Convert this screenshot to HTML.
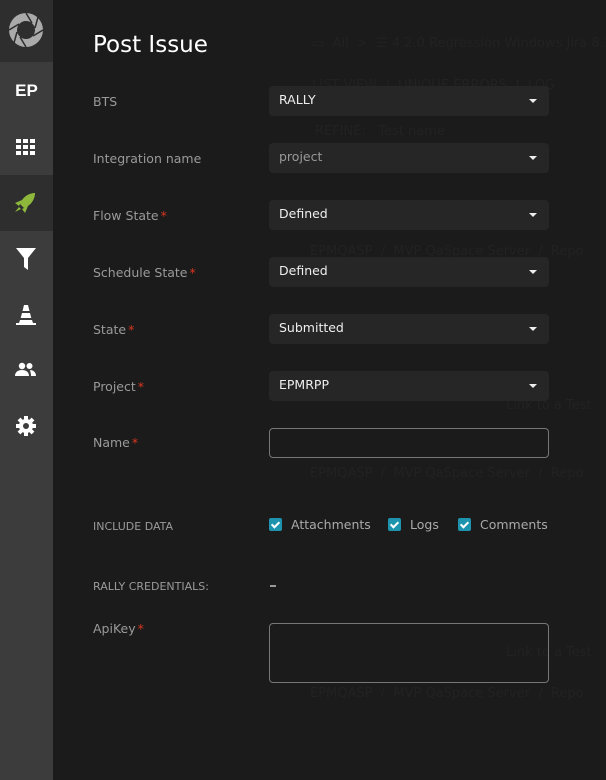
<!DOCTYPE html>
<html><head><meta charset="utf-8"><style>
*{box-sizing:border-box;margin:0;padding:0}
body{width:606px;height:780px;background:#1b1b1b;font-family:"DejaVu Sans","Liberation Sans",sans-serif;overflow:hidden;position:relative}
.sb{position:absolute;left:0;top:0;width:53px;height:780px;background:#3c3c3d}
.sb .top{position:absolute;left:0;top:0;width:53px;height:62px;background:#2e2e2e}
.sb .act{position:absolute;left:0;top:175px;width:53px;height:56px;background:#2e2e2e}
.ic{position:absolute;left:0;width:53px;text-align:center;color:#fff}
.bg{position:absolute;color:#222;font-size:13px;white-space:nowrap}
.lbl{position:absolute;left:93px;color:#9a9a9a;font-size:12.5px}
.lbl b{color:#d8371f;font-weight:normal;margin-left:2px}
.cap{position:absolute;left:93px;color:#9a9a9a;font-size:11px}
.sel{position:absolute;left:269px;width:280px;height:30px;background:#262626;border-radius:4px;color:#eee;font-size:12.5px;padding:6px 10px}
.sel:after{content:"";position:absolute;right:12px;top:13px;border-left:4px solid transparent;border-right:4px solid transparent;border-top:4px solid #eee}
.inp{position:absolute;left:269px;width:280px;border:1px solid #777;border-radius:4px}
.cb{position:absolute;top:518px;width:13px;height:13px;background:#1d93ad;border-radius:2px}
.cb:after{content:"";position:absolute;left:4px;top:2px;width:3px;height:6px;border:solid #fff;border-width:0 2px 2px 0;transform:rotate(45deg)}
.cbl{position:absolute;top:517px;color:#aaa;font-size:12.5px}
</style></head><body>
<div class="bg" style="left:312px;top:36px">▭ &nbsp;All &nbsp;&gt; &nbsp;☰ 4.2.0 Regression Windows Jira 8.19.1</div>
<div class="bg" style="left:312px;top:78px">LIST VIEW &nbsp;| &nbsp;UNIQUE ERRORS &nbsp;| &nbsp;LOG</div>
<div class="bg" style="left:315px;top:124px">REFINE: &nbsp;&nbsp;Test name</div>
<div class="bg" style="left:310px;top:244px">EPMQASP &nbsp;/ &nbsp;MVP QaSpace Server &nbsp;/ &nbsp;Repo</div>
<div class="bg" style="left:310px;top:466px">EPMQASP &nbsp;/ &nbsp;MVP QaSpace Server &nbsp;/ &nbsp;Repo</div>
<div class="bg" style="left:310px;top:686px">EPMQASP &nbsp;/ &nbsp;MVP QaSpace Server &nbsp;/ &nbsp;Repo</div>
<div class="bg" style="left:506px;top:398px">Link to a Test</div>
<div class="bg" style="left:506px;top:645px">Link to a Test</div>

<div class="sb"><div class="top"></div><div class="act"></div>
<svg class="ic" style="top:12px;left:8px;width:36px;height:36px" viewBox="0 0 36 36"><circle cx="18" cy="18" r="17" fill="#aaa"/><circle cx="18" cy="18" r="9" fill="#2e2e2e"/><g stroke="#2e2e2e" stroke-width="1.5"><line x1="18" y1="1" x2="24" y2="11"/><line x1="35" y1="18" x2="25" y2="24"/><line x1="18" y1="35" x2="12" y2="25"/><line x1="1" y1="18" x2="11" y2="12"/><line x1="30" y1="5" x2="27" y2="16"/><line x1="6" y1="31" x2="9" y2="20"/></g></svg>
<div class="ic" style="top:81px;font-size:17px;font-weight:bold;font-family:'Liberation Sans',sans-serif">EP</div>
<svg class="ic" style="top:139px;left:16px;width:20px;height:17px" viewBox="0 0 20 17" fill="#fff"><rect x="0" y="0" width="5" height="4"/><rect x="7" y="0" width="5" height="4"/><rect x="14" y="0" width="5" height="4"/><rect x="0" y="6" width="5" height="4"/><rect x="7" y="6" width="5" height="4"/><rect x="14" y="6" width="5" height="4"/><rect x="0" y="12" width="5" height="4"/><rect x="7" y="12" width="5" height="4"/><rect x="14" y="12" width="5" height="4"/></svg>
<svg class="ic" style="top:192px;left:14px;width:22px;height:22px" viewBox="0 0 22 22" fill="#8db83c"><path d="M21 1C14 1 8 6 6 12l4 4c6-2 11-8 11-15z"/><path d="M8 8L1 11l4 3zM14 14l-3 7-3-4z"/><path d="M5 15l-4 5 6-3z"/></svg>
<svg class="ic" style="top:248px;left:16px;width:20px;height:22px" viewBox="0 0 20 22" fill="#fff"><path d="M0 0h20L12 10v12l-4-3V10z"/></svg>
<svg class="ic" style="top:305px;left:16px;width:20px;height:20px" viewBox="0 0 20 20" fill="#fff"><path d="M8 0h4l1.5 6h-7zM6 8h8l1.3 5H4.7zM4 15h12l1 3h3v2H0v-2h3z"/></svg>
<svg class="ic" style="top:362px;left:15px;width:21px;height:15px" viewBox="0 0 21 15" fill="#fff"><circle cx="7" cy="4" r="3.2"/><circle cx="14.5" cy="4" r="3"/><path d="M0 14c0-4 3-6 7-6s7 2 7 6zM15 8c3 0 6 2 6 6h-5c0-2-.5-4-1-6z"/></svg>
<svg class="ic" style="top:416px;left:16px;width:20px;height:20px" viewBox="0 0 20 20"><circle cx="10" cy="10" r="7" fill="#fff"/><g stroke="#fff" stroke-width="4"><line x1="10" y1="0" x2="10" y2="20"/><line x1="0" y1="10" x2="20" y2="10"/><line x1="3" y1="3" x2="17" y2="17"/><line x1="17" y1="3" x2="3" y2="17"/></g><circle cx="10" cy="10" r="3" fill="#3c3c3d"/></svg>
</div>

<div style="position:absolute;left:93px;top:32px;color:#fff;font-size:23px">Post Issue</div>

<div class="lbl" style="top:94px">BTS</div><div class="sel" style="top:86px">RALLY</div>
<div class="lbl" style="top:151px">Integration name</div><div class="sel" style="top:143px;color:#999">project</div>
<div class="lbl" style="top:208px">Flow State<b>*</b></div><div class="sel" style="top:200px">Defined</div>
<div class="lbl" style="top:265px">Schedule State<b>*</b></div><div class="sel" style="top:257px">Defined</div>
<div class="lbl" style="top:322px">State<b>*</b></div><div class="sel" style="top:314px">Submitted</div>
<div class="lbl" style="top:379px">Project<b>*</b></div><div class="sel" style="top:371px">EPMRPP</div>
<div class="lbl" style="top:435px">Name<b>*</b></div><div class="inp" style="top:428px;height:30px"></div>

<div class="cap" style="top:520px">INCLUDE DATA</div>
<div class="cb" style="left:269px"></div><div class="cbl" style="left:291px">Attachments</div>
<div class="cb" style="left:388px"></div><div class="cbl" style="left:410px">Logs</div>
<div class="cb" style="left:458px"></div><div class="cbl" style="left:480px">Comments</div>
<div class="cap" style="top:580px">RALLY CREDENTIALS:</div>
<div style="position:absolute;left:270px;top:585px;width:6px;height:2px;background:#999"></div>
<div class="lbl" style="top:621px">ApiKey<b>*</b></div><div class="inp" style="top:623px;height:60px"></div>
</body></html>
